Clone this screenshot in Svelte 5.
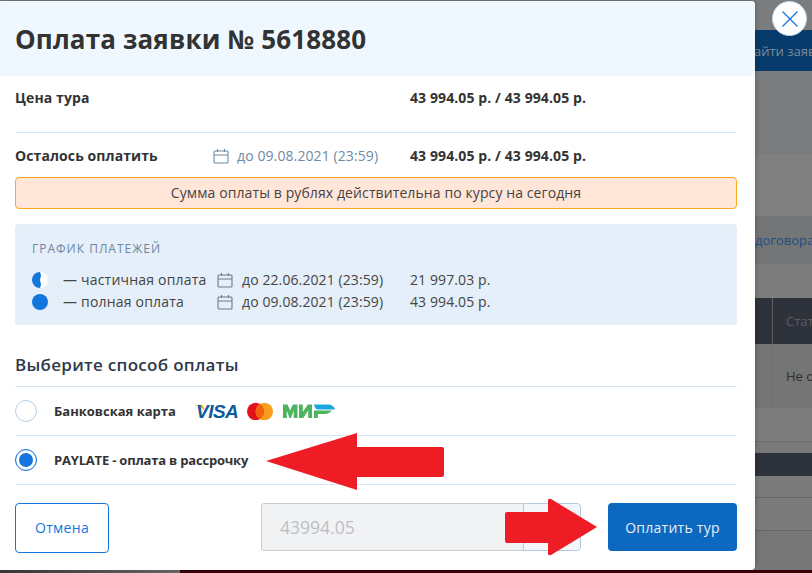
<script>
  const rows = [
    { label: '— частичная оплата', date: 'до 22.06.2021 (23:59)', sum: '21 997.03 р.', half: true },
    { label: '— полная оплата', date: 'до 09.08.2021 (23:59)', sum: '43 994.05 р.', half: false }
  ];
</script>

<div class="page">
  <main class="modal">
    <header class="head"><h1>Оплата заявки № 5618880</h1></header>
    <section class="body">
      <div class="row first">
        <b class="lbl">Цена тура</b>
        <b class="val">43 994.05 р. / 43 994.05 р.</b>
      </div>
      <div class="row second">
        <b class="lbl">Осталось оплатить</b>
        <span class="due">
          <svg class="cal" viewBox="0 0 16 16" width="16" height="16" fill="none" stroke="currentColor" stroke-width="1.1"><rect x="1" y="3" width="14" height="12" rx="1"/><path d="M1 7h14M4.500 1v3M11.500 1v3"/></svg>
          до 09.08.2021 (23:59)
        </span>
        <b class="val">43 994.05 р. / 43 994.05 р.</b>
      </div>
      <div class="alert">Сумма оплаты в рублях действительна по курсу на сегодня</div>
      <div class="plan">
        <div class="plan-title">ГРАФИК ПЛАТЕЖЕЙ</div>
        {#each rows as r}
          <div class="plan-row">
            <svg class="dot" viewBox="0 0 16 16" width="16" height="16">
              <circle cx="8" cy="8" r="8" fill={r.half ? '#fff' : '#1276dd'}/>
              {#if r.half}<path d="M8 0A8 8 0 0 0 8 16L8 8Z" fill="#1276dd"/><path d="M8 0L8 8L8 16L9 13L8 8L9 3Z" fill="#1276dd"/>{/if}
            </svg>
            <span class="plan-lbl">{r.label}</span>
            <svg class="cal2" viewBox="0 0 16 16" width="16" height="16" fill="none" stroke="currentColor" stroke-width="1.1"><rect x="1" y="3" width="14" height="12" rx="1"/><path d="M1 7h14M4.500 1v3M11.500 1v3"/></svg>
            <span class="plan-date">{r.date}</span>
            <span class="plan-sum">{r.sum}</span>
          </div>
        {/each}
      </div>
      <h2>Выберите способ оплаты</h2>
      <div class="opt">
        <span class="radio"></span>
        <b>Банковская карта</b>
        <svg class="logos" viewBox="0 0 142 20" width="142" height="20">
          <path d="M0 5C5 5 9 7 12 12L10 6C9.500 5 8.500 4.800 7 4.800Z" fill="#f6a21e"/>
          <text x="3" y="18" class="visa">VISA</text>
          <circle cx="62.700" cy="11.500" r="8.700" fill="#e3131b"/>
          <circle cx="71.300" cy="11.500" r="8.700" fill="#f79e1b"/>
          <path d="M67 4A8.700 8.700 0 0 1 67 19A8.700 8.700 0 0 1 67 4Z" fill="#f0600f"/>
          <path d="M90 18V4.500h4.500l2.700 6 2.700-6h4.600V18h-3.800v-7.500L98 18h-1.600l-2.600-7.500V18ZM106 4.500h3.800V12l5-7.500h4.200V18h-3.800v-7.500L110.200 18H106Z" fill="#4db45e"/>
          <path d="M121 10.500V18h3.800v-4h6c4 0 7-1.500 7.700-3.500Z" fill="#4db45e"/>
          <path d="M121 4.500h14c3 0 6 1.500 7 5h-17c-2 0-3.500-2-4-5Z" fill="#1ba7dc"/>
        </svg>
      </div>
      <div class="opt">
        <span class="radio on"></span>
        <b class="pl">PAYLATE - оплата в рассрочку</b>
      </div>
      <div class="actions">
        <button class="cancel">Отмена</button>
        <div class="amount">
          <input value="43994.05" readonly />
          <span class="addon"></span>
        </div>
        <button class="pay">Оплатить тур</button>
      </div>
    </section>
  </main>

  <aside class="behind">
    <div class="b b-top"></div>
    <div class="b b-nav"><span>айти заявку</span></div>
    <div class="b b-gap1"></div>
    <div class="b b-gap2"></div>
    <div class="b b-link"><span>договора</span></div>
    <div class="b b-gap3"></div>
    <div class="b b-thead"><span class="cell">Статус</span></div>
    <div class="b b-td"><span class="cell">Не оплачен</span></div>
    <div class="b b-gap4"></div>
    <div class="b b-gap5"></div>
    <div class="b b-dark"></div>
    <div class="b b-r1"></div>
    <div class="b b-r2"></div>
    <div class="b b-r3"></div>
  </aside>

  <div class="footer-strip"></div>

  <button class="close" aria-label="Закрыть">
    <svg viewBox="0 0 16 16" width="16" height="16" fill="none" stroke="#1276dd" stroke-width="1.300"><path d="M.5.500l15 15M15.500.500l-15 15"/></svg>
  </button>

  <svg class="arrows" viewBox="0 0 812 573" width="812" height="573">
    <path d="M266 461L357 433V447H442Q444 447 444 449V475Q444 477 442 477H357V490Z" fill="#ee1c25"/>
    <path d="M507 512H548V500Q549 498 551 499L597 527L551 555Q549 556 548 554V543H507Q505 543 505 541V514Q505 512 507 512Z" fill="#ee1c25"/>
  </svg>
</div>

<style>
  :global(body) { margin: 0; background: #7b7c7d; }
  * { box-sizing: border-box; }
  .page {
    position: relative;
    width: 812px;
    height: 573px;
    overflow: hidden;
    display: flex;
    align-items: flex-start;
    padding-top: 1px;
    background: #7b7c7d;
    font-family: "Open Sans", sans-serif;
    color: #333;
  }
  .modal {
    position: relative;
    z-index: 2;
    width: 755px;
    height: 569px;
    flex: none;
    background: #fff;
    border-radius: 0 4px 4px 0;
    overflow: hidden;
    box-shadow: 0 0 6px rgba(0, 0, 0, .25);
  }
  .head {
    height: 75px;
    background: #f0f8ff;
    padding: 0 15px;
    display: flex;
    align-items: center;
  }
  h1 { margin: 0; font-size: 26px; font-weight: 700; letter-spacing: .14px; color: #333; line-height: 1; }
  .body { padding: 0 18px 0 15px; }
  .row { display: flex; align-items: center; font-size: 14px; letter-spacing: .1px; }
  .row b { font-weight: 700; }
  .first { height: 57px; padding-bottom: 14px; border-bottom: 1px solid #d6e9fb; }
  .second { height: 44px; padding-top: 1px; }
  .lbl { width: 198px; flex: none; }
  .first .lbl { width: 395px; }
  .due { width: 197px; flex: none; display: flex; align-items: center; gap: 8px; font-size: 14px; color: #6f8aa5; }
  .cal { flex: none; }
  .val { color: #333; }
  .alert {
    height: 32px;
    padding-bottom: 1px;
    background: #ffe6d9;
    border: 1px solid #ffa81e;
    border-radius: 4px;
    font-size: 14px;
    letter-spacing: .1px;
    color: #444;
    display: flex;
    align-items: center;
    justify-content: center;
  }
  .plan {
    margin-top: 15px;
    height: 101px;
    background: #e4eff9;
    border-radius: 4px;
    padding: 17px 17px 0;
  }
  .plan-title { font-size: 12px; letter-spacing: 1px; color: #6e87a0; line-height: 16px; margin-bottom: 12px; }
  .plan-row { height: 22px; display: flex; align-items: center; font-size: 14px; letter-spacing: .1px; color: #444; }
  .plan-row span { margin-bottom: 2px; }
  .dot { flex: none; }
  .plan-lbl { margin-left: 15px; width: 154px; flex: none; white-space: nowrap; letter-spacing: .2px; }
  .cal2 { flex: none; color: #6f7a85; }
  .plan-date { margin-left: 9px; width: 168px; flex: none; white-space: nowrap; }
  h2 { margin: 29px 0 0; height: 33px; padding-bottom: 8px; border-bottom: 1px solid #d6e4f0; font-size: 17px; font-weight: 600; letter-spacing: .3px; color: #2d3a4a; line-height: 22px; }
  .opt {
    height: 49px;
    display: flex;
    align-items: center;
    border-bottom: 1px solid #d6e9fb;
    font-size: 13px;
    color: #333;
  }
  .opt b { margin-left: 17px; margin-bottom: 1px; font-weight: 700; }
  .opt b.pl { letter-spacing: -.2px; }
  .radio {
    width: 22px;
    height: 22px;
    flex: none;
    border-radius: 50%;
    border: 1px solid #b5cfe6;
    background: #fff;
  }
  .radio.on { border-color: #1276dd; box-shadow: inset 0 0 0 3px #fff, inset 0 0 0 11px #1276dd; }
  .logos { margin-left: 17px; margin-bottom: 3px; flex: none; }
  .visa { font: italic 700 19px "Liberation Sans", sans-serif; fill: #0f5a9c; letter-spacing: -.5px; }
  .actions { display: flex; align-items: flex-start; margin-top: 18px; }
  .cancel {
    width: 94px;
    height: 50px;
    padding: 0 0 2px;
    border: 1px solid #1276dd;
    border-radius: 4px;
    background: #fff;
    color: #1276dd;
    font: 14px "Open Sans", sans-serif;
    letter-spacing: .3px;
  }
  .amount { margin-left: 152px; display: flex; height: 48px; }
  input {
    width: 263px;
    height: 48px;
    border: 1px solid #ccc;
    border-radius: 3px 0 0 3px;
    background: #f1f2f4;
    padding: 0 18px;
    font: 17.500px "Open Sans", sans-serif;
    color: #bcc0c6;
    outline: none;
  }
  .addon { width: 58px; height: 48px; margin-left: -1px; border: 1px solid #b5c9dc; border-radius: 0 4px 4px 0; background: #f5f6f9; }
  .pay {
    margin-left: 27px;
    width: 129px;
    height: 48px;
    border: 0;
    border-radius: 4px;
    background: #0d69bf;
    color: #e6f0fa;
    font: 14px "Open Sans", sans-serif;
    letter-spacing: .25px;
  }
  .behind { flex: 1; min-width: 0; margin-top: -1px; overflow: hidden; font-size: 13px; }
  .b { position: relative; white-space: nowrap; display: flex; align-items: center; }
  .b-top { height: 30px; background: #7b7c7d; }
  .b-nav { height: 41px; background: #073b6b; color: #7d8a96; font-size: 13px; }
  .b-nav span { margin-left: -1px; }
  .b-gap1 { height: 83px; background: #7b7c7d; }
  .b-gap2 { height: 62px; background: #808080; }
  .b-link { height: 48px; background: #747576; color: #1c4f80; font-size: 13px; }
  .b-gap3 { height: 34px; background: #7d7d7d; }
  .b-thead { height: 46px; background: #2e323a; color: #5a5e64; }
  .cell { margin-left: 31px; }
  .b-thead::before { content: ""; position: absolute; left: 17px; top: 0; bottom: 0; width: 1px; background: #5e6064; }
  .b-td { height: 64px; background: #757575; color: #2e2e2e; }
  .b-td::before { content: ""; position: absolute; left: 17px; top: 0; bottom: 0; width: 1px; background: #6e6e6e; }
  .b-gap4 { height: 34px; background: #7d7d7d; border-bottom: 1px solid #6a6a6a; }
  .b-gap5 { height: 11px; background: #7a7a7a; }
  .b-dark { height: 23px; background: #2e323a; }
  .b-r1 { height: 22px; background: #7b7b7b; border-bottom: 1px solid #666; }
  .b-r2 { height: 33px; background: #7b7b7b; border-bottom: 1px solid #666; }
  .b-r3 { height: 40px; background: #777; }
  .footer-strip {
    position: absolute;
    left: 0;
    right: 0;
    bottom: 0;
    height: 3px;
    z-index: 1;
    background: linear-gradient(90deg, #3c3c3c 0, #6c6c6c 180px, #3a0008 180px);
  }
  .close {
    position: absolute;
    z-index: 3;
    left: 772px;
    top: 1px;
    width: 35px;
    height: 35px;
    padding: 0;
    border: 1px solid #c9d8e6;
    border-radius: 50%;
    background: #fff;
    display: flex;
    align-items: center;
    justify-content: center;
  }
  .arrows { position: absolute; left: 0; top: 0; z-index: 4; pointer-events: none; }
</style>
